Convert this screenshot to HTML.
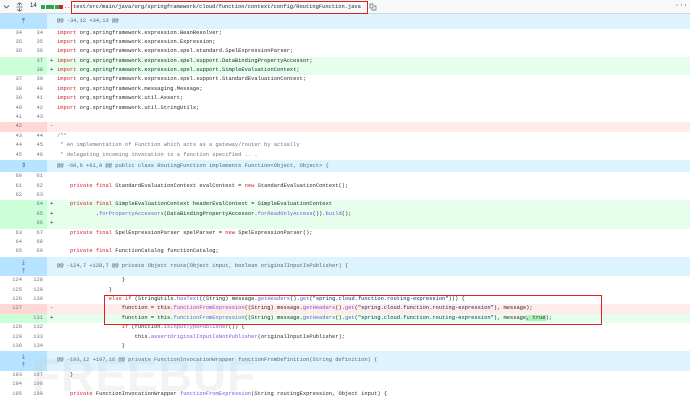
<!DOCTYPE html>
<html><head><meta charset="utf-8"><style>
*{margin:0;padding:0;box-sizing:border-box}
body{width:690px;height:400px;overflow:hidden;background:#fff;font-family:"Liberation Mono",monospace;font-size:5.4px;color:#1f2328;position:relative}
.hdr{position:absolute;left:0;top:0;width:690px;height:14px;background:#f6f8fa;border-bottom:1px solid #d0d7de}
.r{position:relative;height:9.4px;line-height:9.4px;white-space:pre}
.r .o,.r .n{position:absolute;top:0;width:22px;text-align:right;color:#6e7781}
.r .o{left:0}.r .n{left:21px}
.r .m{position:absolute;left:50px;top:0}
.r .c{position:absolute;left:57px;top:0}
.r .g{position:absolute;left:0;top:0;width:47px;height:100%}
.add{background:#e6ffec}.add .g{background:#ccffd8}
.del{background:#ffebe9}.del .g{background:#ffd7d5}
.h{position:relative;background:#ddf4ff;color:#59636e;white-space:pre}
.h .g{position:absolute;left:0;top:0;width:47px;height:100%;background:#b6e3ff;color:#3b5a7a;text-align:center;font-family:"DejaVu Sans",sans-serif;font-size:7px}
.h .c{position:absolute;left:57px}
.k{color:#cf222e}.f{color:#8250df}.s{color:#0a3069}.cm{color:#6e7781}
.hl{background:#abf2bc}
</style></head><body>
<div class="hdr">
<svg style="position:absolute;left:3px;top:4px" width="7" height="6" viewBox="0 0 7 6"><path d="M1 1.5 L3.5 4 L6 1.5" fill="none" stroke="#59636e" stroke-width="0.9"/></svg>
<svg style="position:absolute;left:16px;top:2px" width="7" height="10" viewBox="0 0 7 10"><path d="M1 2.5 L3.5 0.8 L6 2.5 M3.5 1 V4 M0.5 5 H6.5 M1 7.5 L3.5 9.2 L6 7.5 M3.5 9 V6" fill="none" stroke="#59636e" stroke-width="0.8"/></svg>
<span style="position:absolute;left:30px;top:3px;font-size:6px;color:#1f2328;font-family:'Liberation Sans',sans-serif">14</span>
<span style="position:absolute;left:41px;top:4.5px;width:4px;height:4px;background:#2da44e"></span>
<span style="position:absolute;left:45.5px;top:4.5px;width:4px;height:4px;background:#2da44e"></span>
<span style="position:absolute;left:50px;top:4.5px;width:4px;height:4px;background:#2da44e"></span>
<span style="position:absolute;left:54.5px;top:4.5px;width:4px;height:4px;background:#2da44e"></span>
<span style="position:absolute;left:59px;top:4.5px;width:4px;height:4px;background:#cf222e"></span>
<span style="position:absolute;left:64px;top:3px;line-height:8px;color:#1f2328;font-size:5.4px">..</span>
<span style="position:absolute;left:73px;top:3px;line-height:8px;color:#1f2328;font-size:5.4px">text/src/main/java/org/springframework/cloud/function/context/config/RoutingFunction.java</span>
<div style="position:absolute;left:71px;top:0.5px;width:297px;height:13px;border:1.3px solid #e02020"></div>
<svg style="position:absolute;left:369px;top:3px" width="8" height="8" viewBox="0 0 8 8"><path d="M1 1 H4 V5 H1 Z M5 3 H7 V7 H3 V6" fill="none" stroke="#59636e" stroke-width="0.7"/></svg>
<span style="position:absolute;left:675px;top:2px;color:#59636e;font-size:7px">···</span>
</div>
<div style="position:absolute;top:14px;left:0;width:690px">
<div class="h" style="height:14.5px;line-height:14.5px"><div class="g">⤒</div><span class="c">@@ -34,12 +34,13 @@</span></div>
<div class="r"><span class="o">34</span><span class="n">34</span><span class="c"><span class="k">import</span> org.springframework.expression.BeanResolver;</span></div>
<div class="r"><span class="o">35</span><span class="n">35</span><span class="c"><span class="k">import</span> org.springframework.expression.Expression;</span></div>
<div class="r"><span class="o">36</span><span class="n">36</span><span class="c"><span class="k">import</span> org.springframework.expression.spel.standard.SpelExpressionParser;</span></div>
<div class="r add"><span class="g"></span><span class="n">37</span><span class="m">+</span><span class="c"><span class="k">import</span> org.springframework.expression.spel.support.DataBindingPropertyAccessor;</span></div>
<div class="r add"><span class="g"></span><span class="n">38</span><span class="m">+</span><span class="c"><span class="k">import</span> org.springframework.expression.spel.support.SimpleEvaluationContext;</span></div>
<div class="r"><span class="o">37</span><span class="n">39</span><span class="c"><span class="k">import</span> org.springframework.expression.spel.support.StandardEvaluationContext;</span></div>
<div class="r"><span class="o">38</span><span class="n">40</span><span class="c"><span class="k">import</span> org.springframework.messaging.Message;</span></div>
<div class="r"><span class="o">39</span><span class="n">41</span><span class="c"><span class="k">import</span> org.springframework.util.Assert;</span></div>
<div class="r"><span class="o">40</span><span class="n">42</span><span class="c"><span class="k">import</span> org.springframework.util.StringUtils;</span></div>
<div class="r"><span class="o">41</span><span class="n">43</span></div>
<div class="r del"><span class="g"></span><span class="o">42</span><span class="m">-</span></div>
<div class="r"><span class="o">43</span><span class="n">44</span><span class="c cm">/**</span></div>
<div class="r"><span class="o">44</span><span class="n">45</span><span class="c cm"> * An implementation of Function which acts as a gateway/router by actually</span></div>
<div class="r"><span class="o">45</span><span class="n">46</span><span class="c cm"> * delegating incoming invocation to a function specified .. .</span></div>
<div class="h" style="height:12.3px;line-height:12.3px"><div class="g" style="font-size:6px">⇕</div><span class="c">@@ -60,6 +61,9 @@ public class RoutingFunction implements Function&lt;Object, Object&gt; {</span></div>
<div class="r"><span class="o">60</span><span class="n">61</span></div>
<div class="r"><span class="o">61</span><span class="n">62</span><span class="c">    <span class="k">private final</span> StandardEvaluationContext evalContext = <span class="k">new</span> StandardEvaluationContext();</span></div>
<div class="r"><span class="o">62</span><span class="n">63</span></div>
<div class="r add"><span class="g"></span><span class="n">64</span><span class="m">+</span><span class="c">    <span class="k">private final</span> SimpleEvaluationContext headerEvalContext = SimpleEvaluationContext</span></div>
<div class="r add"><span class="g"></span><span class="n">65</span><span class="m">+</span><span class="c">            .<span class="f">forPropertyAccessors</span>(DataBindingPropertyAccessor.<span class="f">forReadOnlyAccess</span>()).<span class="f">build</span>();</span></div>
<div class="r add"><span class="g"></span><span class="n">66</span><span class="m">+</span></div>
<div class="r"><span class="o">63</span><span class="n">67</span><span class="c">    <span class="k">private final</span> SpelExpressionParser spelParser = <span class="k">new</span> SpelExpressionParser();</span></div>
<div class="r"><span class="o">64</span><span class="n">68</span></div>
<div class="r"><span class="o">65</span><span class="n">69</span><span class="c">    <span class="k">private final</span> FunctionCatalog functionCatalog;</span></div>
<div class="h" style="height:19.4px;line-height:19.4px"><div class="g" style="line-height:9px;font-size:6px;padding-top:1px">⤓<br>⤒</div><span class="c">@@ -124,7 +128,7 @@ private Object route(Object input, boolean originalInputIsPublisher) {</span></div>
<div class="r"><span class="o">124</span><span class="n">128</span><span class="c">                    }</span></div>
<div class="r"><span class="o">125</span><span class="n">129</span><span class="c">                }</span></div>
<div class="r"><span class="o">126</span><span class="n">130</span><span class="c">                <span class="k">else if</span> (StringUtils.<span class="f">hasText</span>((String) message.<span class="f">getHeaders</span>().<span class="f">get</span>(<span class="s">"spring.cloud.function.routing-expression"</span>))) {</span></div>
<div class="r del"><span class="g"></span><span class="o">127</span><span class="m">-</span><span class="c">                    function = this.<span class="f">functionFromExpression</span>((String) message.<span class="f">getHeaders</span>().<span class="f">get</span>(<span class="s">"spring.cloud.function.routing-expression"</span>), message);</span></div>
<div class="r add"><span class="g"></span><span class="n">131</span><span class="m">+</span><span class="c">                    function = this.<span class="f">functionFromExpression</span>((String) message.<span class="f">getHeaders</span>().<span class="f">get</span>(<span class="s">"spring.cloud.function.routing-expression"</span>), message<span class="hl">, true</span>);</span></div>
<div class="r"><span class="o">128</span><span class="n">132</span><span class="c">                    <span class="k">if</span> (function.<span class="f">isInputTypePublisher</span>()) {</span></div>
<div class="r"><span class="o">129</span><span class="n">133</span><span class="c">                        this.<span class="f">assertOriginalInputIsNotPublisher</span>(originalInputIsPublisher);</span></div>
<div class="r"><span class="o">130</span><span class="n">134</span><span class="c">                    }</span></div>
<div class="h" style="height:19.8px;line-height:19.8px"><div class="g" style="line-height:9px;font-size:6px;padding-top:1px">⤓<br>⤒</div><span class="c">@@ -193,12 +197,16 @@ private FunctionInvocationWrapper functionFromDefinition(String definition) {</span></div>
<div class="r"><span class="o">193</span><span class="n">197</span><span class="c">    }</span></div>
<div class="r"><span class="o">194</span><span class="n">198</span></div>
<div class="r"><span class="o">195</span><span class="n">199</span><span class="c">    <span class="k">private</span> FunctionInvocationWrapper <span class="f">functionFromExpression</span>(String routingExpression, Object input) {</span></div>
</div>
<div style="position:absolute;left:104px;top:295px;width:498px;height:30px;border:1.3px solid #e02020"></div>
<div style="position:absolute;left:32px;top:350px;font-family:'Liberation Sans',sans-serif;font-weight:bold;font-size:46px;letter-spacing:1px;color:rgba(200,200,200,0.22);line-height:50px">FREEBUF</div>
</body></html>
